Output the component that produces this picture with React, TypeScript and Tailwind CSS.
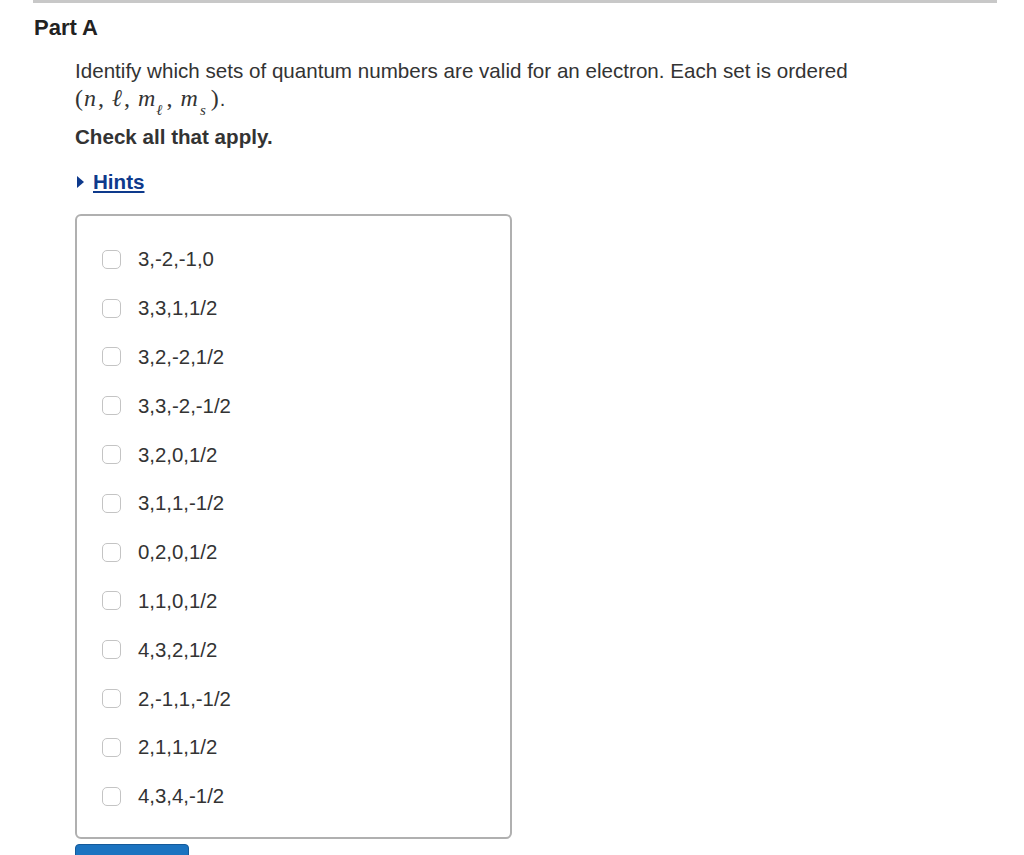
import React from "react";

const options = [
  "3,-2,-1,0",
  "3,3,1,1/2",
  "3,2,-2,1/2",
  "3,3,-2,-1/2",
  "3,2,0,1/2",
  "3,1,1,-1/2",
  "0,2,0,1/2",
  "1,1,0,1/2",
  "4,3,2,1/2",
  "2,-1,1,-1/2",
  "2,1,1,1/2",
  "4,3,4,-1/2",
];

const mathFont = { fontFamily: '"Liberation Serif", "DejaVu Serif", serif' };

export default function App() {
  return (
    <div className="min-h-[855px] bg-white text-[#333] font-['Liberation_Sans',Arial,sans-serif] overflow-hidden">
      <div className="ml-[33px] w-[964px] h-[3px] bg-[#c8c8c8]" />
      <h2 className="ml-[34px] mt-[12px] text-[22px] font-bold leading-[26px] text-[#222]">Part A</h2>

      <div className="ml-[75px] mt-[16px]">
        <p className="text-[20.6px] leading-[28px]">
          Identify which sets of quantum numbers are valid for an electron. Each set is ordered
          <br />
          <span className="text-[24px] tracking-[1px] leading-[20px]" style={mathFont}>
            (<i className="mr-[1px]">n</i>,&nbsp;<i className="mr-[1px]">ℓ</i>,&nbsp;<i>m</i>
            <sub className="text-[15px] italic align-[-5px] leading-none mr-[3px]">ℓ</sub>,&nbsp;<i>m</i>
            <sub className="text-[15px] italic align-[-5px] leading-none ml-[1px] mr-[4px]">s</sub>)
          </span>
          <span className="text-[20px]">.</span>
        </p>

        <p className="mt-[11px] text-[20.6px] font-bold leading-[24px]">Check all that apply.</p>

        <div className="mt-[21px] flex items-center gap-[8px] h-[24px]">
          <svg width="9" height="12" viewBox="0 0 9 12" className="ml-[1px]">
            <path d="M1 0 L8 6 L1 12 Z" fill="#0e3a8c" />
          </svg>
          <a href="#" className="text-[20.6px] font-bold text-[#0e3a8c] underline leading-[24px]">
            Hints
          </a>
        </div>

        <div className="mt-[20px] w-[437px] h-[625px] border-2 border-[#b0b0b0] rounded-[6px] pt-[19px] pl-[25px]">
          {options.map((o, i) => (
            <label key={i} className="flex items-center h-[48.8px]">
              <span className="w-[19px] h-[19px] rounded-[5px] border border-[#c4c4c4] bg-white" />
              <span className="ml-[17px] text-[20.4px] leading-[24px] text-[#333]">{o}</span>
            </label>
          ))}
        </div>

        <button className="mt-[5px] w-[114px] h-[36px] rounded-[4px] bg-[#1b73c0] border border-[#145a9a] text-white text-[18px] font-bold leading-[34px]">
          Submit
        </button>
      </div>
    </div>
  );
}
